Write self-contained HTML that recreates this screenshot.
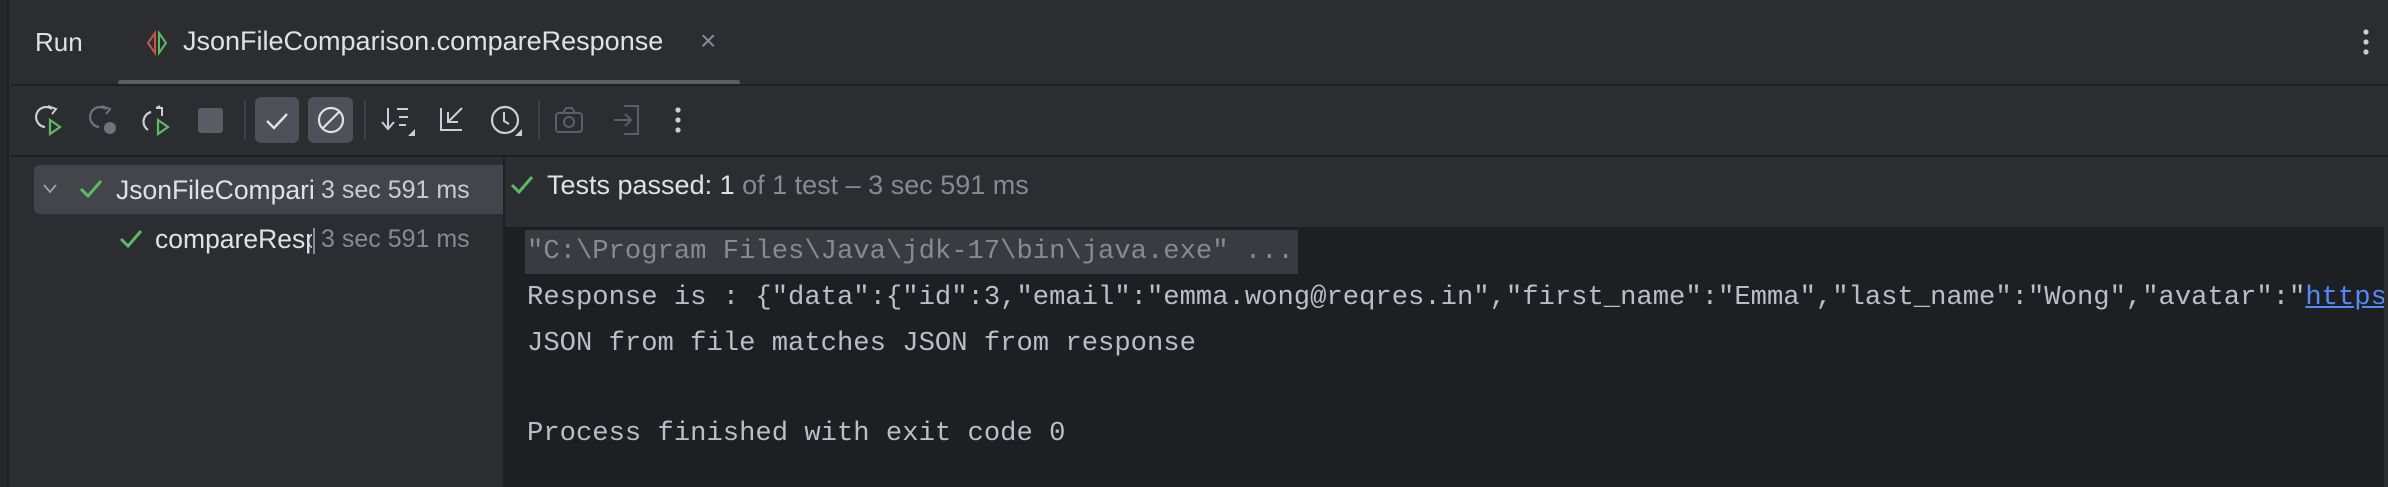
<!DOCTYPE html>
<html><head><meta charset="utf-8"><style>
*{margin:0;padding:0;box-sizing:border-box}
body{width:2388px;height:487px;background:#2b2d30;position:relative;overflow:hidden;font-family:"Liberation Sans",sans-serif;color:#dfe1e5}
.a{position:absolute}
.ui{font-size:26.5px;white-space:nowrap}
.mono{font-family:"Liberation Mono",monospace;font-size:27.2px;white-space:pre;color:#bcbec4}
.gray{color:#868a91}
svg{position:absolute;overflow:visible}
</style></head><body>
<div class="a" style="left:0;top:0;width:9px;height:487px;background:#26282b;border-right:2px solid #1e1f22"></div>
<div class="a ui" style="left:35px;top:27px;font-size:26px">Run</div>
<svg style="left:145px;top:31px" width="24" height="24"><path d="M10 2 L3 12 L10 22Z" fill="none" stroke="#c75450" stroke-width="2"/><path d="M14 2 L21 12 L14 22Z" fill="none" stroke="#5fb865" stroke-width="2"/></svg>
<div class="a ui" style="left:183px;top:26px;font-size:27px">JsonFileComparison.compareResponse</div>
<div class="a ui gray" style="left:700px;top:25px;font-size:28px">×</div>
<div class="a" style="left:118px;top:80px;width:622px;height:5px;border-radius:3px;background:#5b5e66"></div>
<div class="a" style="left:11px;top:84px;width:2377px;height:2px;background:#1e1f22"></div>
<svg style="left:2362px;top:28px" width="8" height="30"><circle cx="4" cy="4" r="2.6" fill="#ccced3"/><circle cx="4" cy="14" r="2.6" fill="#ccced3"/><circle cx="4" cy="24" r="2.6" fill="#ccced3"/></svg>
<!-- toolbar -->
<div class="a" style="left:255px;top:97px;width:44px;height:46px;border-radius:6px;background:#4e5157"></div>
<div class="a" style="left:308px;top:97px;width:45px;height:46px;border-radius:6px;background:#4e5157"></div>
<div class="a" style="left:244px;top:100px;width:2px;height:40px;background:#3c3f44"></div>
<div class="a" style="left:364px;top:100px;width:2px;height:40px;background:#3c3f44"></div>
<div class="a" style="left:538px;top:100px;width:2px;height:40px;background:#3c3f44"></div>
<svg style="left:36px;top:104px" width="32" height="32"><path d="M16 5 A10 10 0 1 0 9 23" fill="none" stroke="#ccced3" stroke-width="2.2"/><path d="M12 2 L20 5 L16 10" fill="none" stroke="#ccced3" stroke-width="2"/><path d="M14 16 L24 23 L14 30Z" fill="none" stroke="#5fb865" stroke-width="2.2"/></svg>
<svg style="left:90px;top:104px" width="32" height="32"><path d="M16 5 A10 10 0 1 0 9 23" fill="none" stroke="#6f737a" stroke-width="2.2"/><path d="M12 2 L20 5 L16 10" fill="none" stroke="#6f737a" stroke-width="2"/><circle cx="20" cy="24" r="6" fill="#6f737a"/></svg>
<svg style="left:142px;top:104px" width="32" height="32"><path d="M9 8 A10 10 0 0 0 6 26" fill="none" stroke="#ccced3" stroke-width="2.2"/><path d="M14 4 L18 2 M14 4 L20 4 L20 12" fill="none" stroke="#ccced3" stroke-width="2"/><path d="M16 16 L26 23 L16 30Z" fill="none" stroke="#5fb865" stroke-width="2.2"/></svg>
<div class="a" style="left:198px;top:108px;width:25px;height:25px;border-radius:3px;background:#5a5d63"></div>
<svg style="left:264px;top:108px" width="26" height="26"><path d="M3 13 L10 20 L23 6" fill="none" stroke="#dfe1e5" stroke-width="2.4"/></svg>
<svg style="left:316px;top:104px" width="30" height="32"><circle cx="15" cy="16" r="12" fill="none" stroke="#dfe1e5" stroke-width="2.2"/><path d="M7 24 L23 8" stroke="#dfe1e5" stroke-width="2.2"/></svg>
<svg style="left:380px;top:104px" width="36" height="34"><path d="M8 4 V24 M2 18 L8 25 L14 18" fill="none" stroke="#ccced3" stroke-width="2"/><path d="M17 5 H28 M19 13 H28 M19 21 H26" stroke="#ccced3" stroke-width="2"/><path d="M35 25 V32 H28Z" fill="#ccced3"/></svg>
<svg style="left:438px;top:104px" width="30" height="30"><path d="M3 4 V26 H24 M24 4 L10 18 M10 8 V18 H20" fill="none" stroke="#ccced3" stroke-width="2"/></svg>
<svg style="left:490px;top:104px" width="36" height="34"><circle cx="15" cy="16" r="13" fill="none" stroke="#ccced3" stroke-width="2.2"/><path d="M14 8 V17 L19 20" fill="none" stroke="#ccced3" stroke-width="2"/><path d="M32 25 V32 H25Z" fill="#ccced3"/></svg>
<svg style="left:554px;top:106px" width="30" height="28"><rect x="2" y="7" width="26" height="19" rx="3" fill="none" stroke="#5c5f66" stroke-width="2"/><path d="M9 7 L12 2 H18 L21 7" fill="none" stroke="#5c5f66" stroke-width="2"/><circle cx="15" cy="16" r="5" fill="none" stroke="#5c5f66" stroke-width="2"/></svg>
<svg style="left:612px;top:104px" width="30" height="32"><path d="M12 2 H26 V30 H12" fill="none" stroke="#5c5f66" stroke-width="2"/><path d="M2 16 H19 M13 10 L19 16 L13 22" fill="none" stroke="#5c5f66" stroke-width="2"/></svg>
<svg style="left:674px;top:106px" width="8" height="30"><circle cx="4" cy="4" r="2.6" fill="#ccced3"/><circle cx="4" cy="14" r="2.6" fill="#ccced3"/><circle cx="4" cy="24" r="2.6" fill="#ccced3"/></svg>
<div class="a" style="left:11px;top:155px;width:2377px;height:2px;background:#1e1f22"></div>
<!-- left tree -->
<div class="a" style="left:503px;top:157px;width:2px;height:330px;background:#1e1f22"></div>
<div class="a" style="left:34px;top:165px;width:469px;height:49px;border-radius:6px 0 0 6px;background:#43454a"></div>
<svg style="left:42px;top:183px" width="16" height="12"><path d="M2 2 L8 9 L14 2" fill="none" stroke="#9da0a8" stroke-width="1.8"/></svg>
<svg style="left:79px;top:178px" width="24" height="22"><path d="M2 11 L9 18 L22 3" fill="none" stroke="#5fb865" stroke-width="3"/></svg>
<div class="a ui" style="left:116px;top:175px;width:199px;overflow:hidden">JsonFileComparison</div>
<div class="a ui" style="left:321px;top:176px;color:#c9ccd1;font-size:25px">3 sec 591 ms</div>
<svg style="left:119px;top:228px" width="24" height="22"><path d="M2 11 L9 18 L22 3" fill="none" stroke="#5fb865" stroke-width="3"/></svg>
<div class="a ui" style="left:155px;top:224px;width:157px;overflow:hidden">compareResponse</div>
<div class="a" style="left:313px;top:228px;width:2px;height:26px;background:#8a8d93"></div>
<div class="a ui gray" style="left:321px;top:225px;font-size:25px">3 sec 591 ms</div>
<!-- right -->
<svg style="left:510px;top:174px" width="24" height="22"><path d="M2 11 L9 18 L22 3" fill="none" stroke="#5fb865" stroke-width="3"/></svg>
<div class="a ui" style="left:547px;top:170px;font-size:27px">Tests passed: 1 <span class="gray">of 1 test – 3 sec 591 ms</span></div>
<div class="a" style="left:505px;top:227px;width:1879px;height:260px;background:#1e1f22"></div>
<div class="a" style="left:525px;top:230px;width:773px;height:44px;background:#393b40"></div>
<div class="a mono" style="left:527px;top:236px;color:#868a91">"C:\Program Files\Java\jdk-17\bin\java.exe" ...</div>
<div class="a mono" style="left:527px;top:282px;width:1857px;overflow:hidden">Response is : {"data":{"id":3,"email":"emma.wong@reqres.in","first_name":"Emma","last_name":"Wong","avatar":"<span style="color:#548af7;text-decoration:underline">https://reqres.in</span></div>
<div class="a mono" style="left:527px;top:328px">JSON from file matches JSON from response</div>
<div class="a mono" style="left:527px;top:418px">Process finished with exit code 0</div>
</body></html>
